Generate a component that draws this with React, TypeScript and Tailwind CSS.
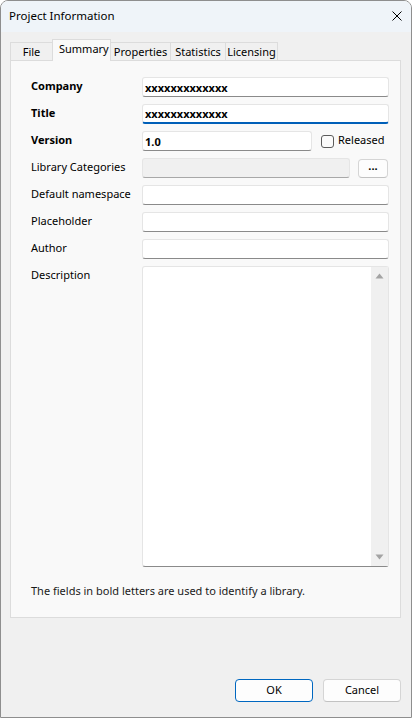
const inputBase =
  'h-[20px] rounded-[3px] border border-[#e5e5e5] bg-white px-[2px] text-[11px] leading-[18px] text-black outline-none'

function Row({ label, bold, children }: { label: string; bold?: boolean; children: React.ReactNode }) {
  return (
    <div className="flex items-center">
      <div className={`w-[111px] shrink-0 -mt-[2px] ${bold ? 'font-bold' : ''}`}>{label}</div>
      <div className="flex-1 flex items-center">{children}</div>
    </div>
  )
}

function Tab({ label, width, active }: { label: string; width: string; active?: boolean }) {
  if (active) {
    return (
      <div
        className={`${width} h-[22px] -mb-px -ml-px pl-[6px] pt-[1px] bg-[#f9f9f9] border border-b-0 border-[#dcdcdc] relative z-10`}
      >
        {label}
      </div>
    )
  }
  return (
    <div
      className={`${width} h-[18px] mt-[3px] leading-[17px] bg-[#f0f0f0] border border-b-0 border-[#dcdcdc] -ml-px first:ml-0 text-center`}
    >
      {label}
    </div>
  )
}

export default function App() {
  return (
    <div className="w-[412px] h-[718px] bg-white font-['Segoe_UI','Noto_Sans',sans-serif] text-[11px] text-black">
      <div className="h-full flex flex-col rounded-t-[8px] border border-[#8e8e8e] overflow-hidden">
        {/* Title bar */}
        <div className="h-[31px] shrink-0 bg-[#eff4f9] flex items-center justify-between pl-[8px] pr-[9px]">
          <span className="text-[11.5px] -mt-[1px]">Project Information</span>
          <svg width="10" height="10" viewBox="0 0 10 10" className="-mt-[1px]">
            <path d="M0.5 0.5 L9.5 9.5 M9.5 0.5 L0.5 9.5" stroke="#000" strokeWidth="1" />
          </svg>
        </div>

        {/* Body */}
        <div className="flex-1 bg-[#f0f0f0] flex flex-col pl-[9px] pr-[10px] pt-[7px] pb-[15px]">
          <div className="flex items-start">
            <Tab label="File" width="w-[43px]" />
            <Tab label="Summary" width="w-[59px]" active />
            <Tab label="Properties" width="w-[61px]" />
            <Tab label="Statistics" width="w-[56px]" />
            <Tab label="Licensing" width="w-[53px]" />
          </div>

          <div className="bg-[#f9f9f9] border border-[#dcdcdc] pl-[20px] pr-[11px] pt-[16px] pb-[17px] flex flex-col">
            <div className="flex flex-col gap-[7px]">
              <Row label="Company" bold>
                <input className={`${inputBase} border-b-[#8a8a8a] w-full font-bold`} defaultValue="xxxxxxxxxxxxx" />
              </Row>
              <Row label="Title" bold>
                <input
                  className={`${inputBase} w-full font-bold border-b-2 border-b-[#005fb8]`}
                  defaultValue="xxxxxxxxxxxxx"
                />
              </Row>
              <Row label="Version" bold>
                <input className={`${inputBase} border-b-[#8a8a8a] w-[170px] font-bold`} defaultValue="1.0" />
                <div className="flex items-center ml-[9px]">
                  <span className="w-[13px] h-[13px] rounded-[3px] border border-[#5c5c5c] bg-[#fbfbfb]" />
                  <span className="ml-[4px] -mt-px">Released</span>
                </div>
              </Row>
              <Row label="Library Categories">
                <div className="h-[20px] w-[208px] rounded-[3px] border border-[#e5e5e5] border-b-[#a8a8a8] bg-[#f0f0f0]" />
                <button className="ml-[8px] h-[19px] w-[30px] rounded-[4px] border border-[#d5d5d5] border-b-[#c2c2c2] bg-[#fdfdfd] text-[11px] leading-[10px] font-bold pb-[4px]">
                  ...
                </button>
              </Row>
              <Row label="Default namespace">
                <input className={`${inputBase} border-b-[#8a8a8a] w-full`} />
              </Row>
              <Row label="Placeholder">
                <input className={`${inputBase} border-b-[#8a8a8a] w-full`} />
              </Row>
              <Row label="Author">
                <input className={`${inputBase} border-b-[#8a8a8a] w-full`} />
              </Row>
              <div className="flex items-start">
                <div className="w-[111px] shrink-0 pt-[1px]">Description</div>
                <div className="flex-1 h-[301px] rounded-[3px] border border-[#e5e5e5] border-b-[#8a8a8a] bg-white flex justify-end">
                  <div className="w-[17px] h-full bg-[#f0f0f0] flex flex-col items-center justify-between py-[6px]">
                    <svg width="9" height="6" viewBox="0 0 9 6">
                      <path d="M4.5 0.5 L8.5 5.5 L0.5 5.5 Z" fill="#a3a3a3" />
                    </svg>
                    <svg width="9" height="6" viewBox="0 0 9 6">
                      <path d="M0.5 0.5 L8.5 0.5 L4.5 5.5 Z" fill="#a3a3a3" />
                    </svg>
                  </div>
                </div>
              </div>
            </div>
            <p className="mt-[16px] text-[#1a1a1a]">The fields in bold letters are used to identify a library.</p>
          </div>

          <div className="flex-1" />

          <div className="flex justify-end gap-[10px]">
            <button className="w-[78px] h-[23px] rounded-[4px] border border-[#0067c0] bg-[#fdfdfd]">OK</button>
            <button className="w-[78px] h-[23px] rounded-[4px] border border-[#d5d5d5] border-b-[#c2c2c2] bg-[#fdfdfd]">
              Cancel
            </button>
          </div>
        </div>
      </div>
    </div>
  )
}
